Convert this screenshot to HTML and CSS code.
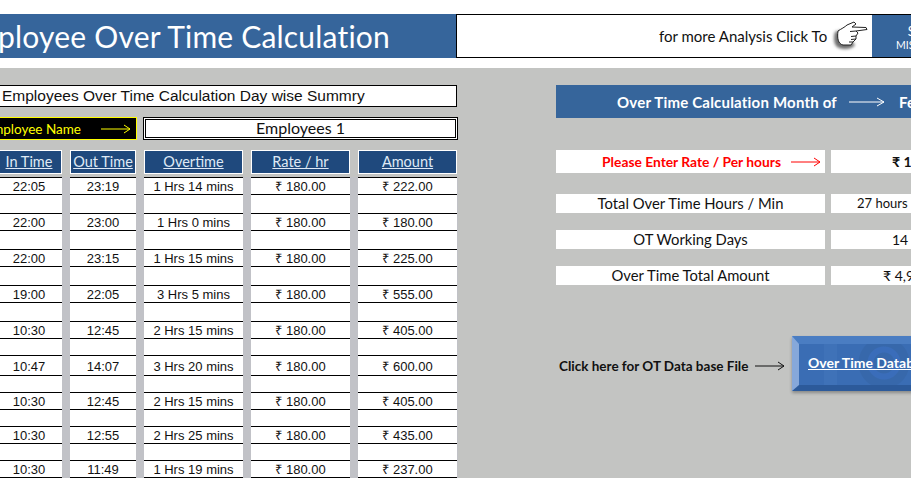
FILE: index.html
```html
<!DOCTYPE html>
<html lang="en">
<head>
<meta charset="utf-8">
<title>Employee Over Time Calculation</title>
<link rel="stylesheet" href="styles.css">
</head>
<body>
<div class="page">
  <header class="top">
    <div class="title"><h1>Employee Over Time Calculation</h1></div>
    <div class="more">
      <span>for more Analysis Click To</span>
      <svg class="hand" viewBox="0 0 45 44" width="45" height="44" aria-hidden="true">
        <defs><filter id="soft" x="-40%" y="-40%" width="180%" height="180%"><feGaussianBlur stdDeviation="1.5"/></filter></defs>
        <path d="M10 18 C8 25 9 32 14 34 C20 36 27 35 30 31 L16 16 Z" fill="#6e6e6e" filter="url(#soft)"/>
        <path d="M13 17 C16 15 20 13 22 11 L29 8 L31 10 L27 13 L41 13.500 L42 15.500 L31 17 L33 19 L31 22 L31 25 L28 28 L26 31 L18 31 C13 30 12 24 13 17 Z" fill="#fff" stroke="#222" stroke-width="1" stroke-linejoin="round"/>
        <path d="M31 17 L25 17.500 M31 22 L26 22.500 M31 25 L26 25.500 M28 28 L24 28" fill="none" stroke="#222" stroke-width="1"/>
      </svg>
      <div class="mis"><b>Sales</b><small>MIS Report</small></div>
    </div>
  </header>

  <main class="sheet">
    <section class="left">
      <div class="sum-title">Employees Over Time Calculation Day wise Summry</div>
      <div class="name-row">
        <div class="name-label">
          <span>Employee Name</span>
          <svg class="arrow" width="32" height="10" viewBox="0 0 32 10" aria-hidden="true"><path d="M1 5 H30 M24 1 L30 5 L24 9" fill="none" stroke="#ff0" stroke-width="1"/></svg>
        </div>
        <div class="name-value">Employees 1</div>
      </div>
      <div class="cols heads">
        <div><u>In Time</u></div><div><u>Out Time</u></div><div><u>Overtime</u></div><div><u>Rate / hr</u></div><div><u>Amount</u></div>
      </div>
      <div class="rows">
        <div class="cols data"><div>22:05</div><div>23:19</div><div>1 Hrs 14 mins</div><div>₹ 180.00</div><div>₹ 222.00</div></div>
        <div class="cols blank"><div></div><div></div><div></div><div></div><div></div></div>
        <div class="cols data"><div>22:00</div><div>23:00</div><div>1 Hrs 0 mins</div><div>₹ 180.00</div><div>₹ 180.00</div></div>
        <div class="cols blank"><div></div><div></div><div></div><div></div><div></div></div>
        <div class="cols data"><div>22:00</div><div>23:15</div><div>1 Hrs 15 mins</div><div>₹ 180.00</div><div>₹ 225.00</div></div>
        <div class="cols blank"><div></div><div></div><div></div><div></div><div></div></div>
        <div class="cols data"><div>19:00</div><div>22:05</div><div>3 Hrs 5 mins</div><div>₹ 180.00</div><div>₹ 555.00</div></div>
        <div class="cols blank"><div></div><div></div><div></div><div></div><div></div></div>
        <div class="cols data"><div>10:30</div><div>12:45</div><div>2 Hrs 15 mins</div><div>₹ 180.00</div><div>₹ 405.00</div></div>
        <div class="cols blank short"><div></div><div></div><div></div><div></div><div></div></div>
        <div class="cols data tall"><div>10:47</div><div>14:07</div><div>3 Hrs 20 mins</div><div>₹ 180.00</div><div>₹ 600.00</div></div>
        <div class="cols blank short"><div></div><div></div><div></div><div></div><div></div></div>
        <div class="cols data"><div>10:30</div><div>12:45</div><div>2 Hrs 15 mins</div><div>₹ 180.00</div><div>₹ 405.00</div></div>
        <div class="cols blank short"><div></div><div></div><div></div><div></div><div></div></div>
        <div class="cols data"><div>10:30</div><div>12:55</div><div>2 Hrs 25 mins</div><div>₹ 180.00</div><div>₹ 435.00</div></div>
        <div class="cols blank short"><div></div><div></div><div></div><div></div><div></div></div>
        <div class="cols data"><div>10:30</div><div>11:49</div><div>1 Hrs 19 mins</div><div>₹ 180.00</div><div>₹ 237.00</div></div>
      </div>
    </section>

    <section class="right">
      <div class="month">
        <span>Over Time Calculation Month of</span>
        <svg class="arrow" width="38" height="10" viewBox="0 0 38 10" aria-hidden="true"><path d="M1 5 H36 M29 1 L36 5 L29 9" fill="none" stroke="#fff" stroke-width="1"/></svg>
        <span>February</span>
      </div>
      <div class="stat stat-rate">
        <div class="stat-label rate-label">
          <span>Please Enter Rate / Per hours</span>
          <svg class="arrow" width="32" height="10" viewBox="0 0 32 10" aria-hidden="true"><path d="M1 5 H30 M24 1 L30 5 L24 9" fill="none" stroke="#f00" stroke-width="1"/></svg>
        </div>
        <div class="stat-value v-rate">₹ 180.00</div>
      </div>
      <div class="stat">
        <div class="stat-label">Total Over Time Hours / Min</div>
        <div class="stat-value v-hours">27 hours 20 mins</div>
      </div>
      <div class="stat">
        <div class="stat-label">OT Working Days</div>
        <div class="stat-value v-days">14</div>
      </div>
      <div class="stat">
        <div class="stat-label">Over Time Total Amount</div>
        <div class="stat-value v-amount">₹ 4,920.00</div>
      </div>
      <div class="link-row">
        <span class="link-note">Click here for OT Data base File</span>
        <svg class="arrow" width="32" height="10" viewBox="0 0 32 10" aria-hidden="true"><path d="M1 5 H30 M24 1 L30 5 L24 9" fill="none" stroke="#111" stroke-width="1"/></svg>
        <div class="db-button"><u>Over Time Database</u></div>
      </div>
    </section>
  </main>
</div>
</body>
</html>
```

FILE: styles.css
```css
* { box-sizing: border-box; }
html, body { margin: 0; height: 100%; overflow: hidden; background: #fff; }
.page {
  width: 1100px;
  margin-left: -4px;
  height: 478px;
  padding-top: 14px;
  font-family: "Lato", "Liberation Sans", sans-serif;
  color: #111;
}
.top { display: flex; height: 44px; width: 1100px; }
.title {
  width: 460px;
  background: #36659b;
  display: flex;
  justify-content: flex-end;
  align-items: center;
  overflow: hidden;
  padding-right: 66px;
}
.title h1 {
  margin: 0;
  font-size: 30px;
  font-weight: 400;
  color: #fff;
  white-space: nowrap;
  letter-spacing: 0.2px;
}
.more {
  width: 640px;
  border: 1px solid #000;
  border-right: 0;
  border-left-width: 1.500px;
  background: #fff;
  display: flex;
  align-items: center;
  padding-left: 202px;
  font-size: 15px;
}
.more > span { white-space: nowrap; }
.hand { flex: none; margin-left: -2px; }
.mis {
  margin-left: 2px;
  width: 100px;
  height: 42px;
  padding-top: 4px;
  background: #36659b;
  color: #fff;
  display: flex;
  flex-direction: column;
  align-items: center;
  justify-content: center;
  text-align: center;
}
.mis b { font-weight: 400; font-size: 13px; line-height: 14px; }
.mis small { font-size: 10.500px; line-height: 14px; white-space: nowrap; }

.sheet {
  margin-top: 10px;
  height: 410px;
  background: #c3c4c2;
  display: flex;
  padding-top: 17px;
  gap: 99px;
  overflow: hidden;
}
.left { width: 461px; flex: none; }
.sum-title {
  height: 22px;
  background: #fff;
  border: 1px solid #000;
  padding-left: 5px;
  font: 15.500px/20px "Liberation Sans", sans-serif;
  white-space: nowrap;
}
.name-row { display: flex; margin-top: 10px; gap: 6px; height: 23px; width: 462px; }
.name-label {
  width: 141px;
  height: 23px;
  background: #000;
  border: 1px solid #ff0;
  color: #ff0;
  font-size: 13.500px;
  display: flex;
  align-items: center;
  justify-content: flex-end;
  gap: 19px;
  padding-right: 4px;
  overflow: hidden;
  white-space: nowrap;
}
.name-value {
  flex: 1;
  background: #fff;
  border: 3px double #000;
  text-align: center;
  font-size: 16px;
  line-height: 15px;
}
.arrow { flex: none; display: block; }
.cols { display: grid; grid-template-columns: 66px 66px 99px 99px 99px; column-gap: 8px; }
.heads { margin-top: 10px; height: 24px; }
.heads > div {
  background: #1f497d;
  border: 1px solid #fff;
  color: #dfe9f5;
  font-size: 14.500px;
  text-align: center;
  line-height: 22px;
  white-space: nowrap;
}
.rows { margin-top: 3px; background: #c1c2c7; width: 462px; }
.data > div {
  height: 18px;
  background: #fff;
  border-top: 1px solid #000;
  border-bottom: 1px solid #000;
  font: 13px/17px "Liberation Sans", sans-serif;
  text-align: center;
  white-space: nowrap;
}
.data.tall > div { height: 21px; line-height: 21px; }
.blank > div { height: 18px; background: #fff; }
.blank.short > div { height: 16px; }

.right { width: 560px; flex: none; }
.month {
  height: 33px;
  background: #36659b;
  color: #fff;
  font-weight: 700;
  font-size: 15px;
  letter-spacing: 0.2px;
  display: flex;
  align-items: center;
  padding-left: 61px;
  gap: 11px;
  white-space: nowrap;
}
.month .arrow + span { margin-left: 2px; }
.stat {
  display: grid;
  grid-template-columns: 269px 136px;
  column-gap: 6px;
  height: 19px;
  margin-top: 17px;
  font-size: 14.800px;
  line-height: 19px;
}
.stat-rate { height: 23px; margin-top: 32px; line-height: 23px; margin-bottom: 21px; }
.stat-label { background: #fff; text-align: center; white-space: nowrap; }
.rate-label {
  color: #f00;
  font-weight: 700;
  font-size: 13.800px;
  display: flex;
  align-items: center;
  justify-content: flex-end;
  gap: 9px;
  padding-right: 3px;
}
.stat-value { background: #fff; white-space: nowrap; overflow: hidden; font-size: 14px; }
.v-rate { padding-left: 61px; font-weight: 700; }
.v-hours { padding-left: 26px; font-size: 13px; }
.v-days { padding-left: 61px; }
.v-amount { padding-left: 52px; }
.link-row { display: flex; align-items: center; margin-top: 51px; height: 55px; padding-left: 3px; }
.link-note { font-size: 13.500px; font-weight: 700; white-space: nowrap; width: 196px; margin-top: 5px; }
.link-row .arrow { margin: 5px 6px 0 -1px; }
.db-button {
  width: 220px;
  height: 55px;
  border-style: solid;
  border-width: 8px 8px 6px 7px;
  border-color: #4a7dc2 #2f5d9e #2c5a9a #86a8da;
  background:
    radial-gradient(circle at 85px 19px, #3768ab 0 10px, #3a6dba 11px 16px, #3768ab 17px 25px, transparent 26px),
    linear-gradient(90deg, transparent 25px, #3f72b8 25px 38px, transparent 38px),
    #3a6db4;
  box-shadow: 0 2px 3px rgba(0, 0, 0, 0.3);
  color: #fff;
  font-size: 14px;
  font-weight: 700;
  line-height: 38px;
  padding-left: 9px;
  white-space: nowrap;
}
```
